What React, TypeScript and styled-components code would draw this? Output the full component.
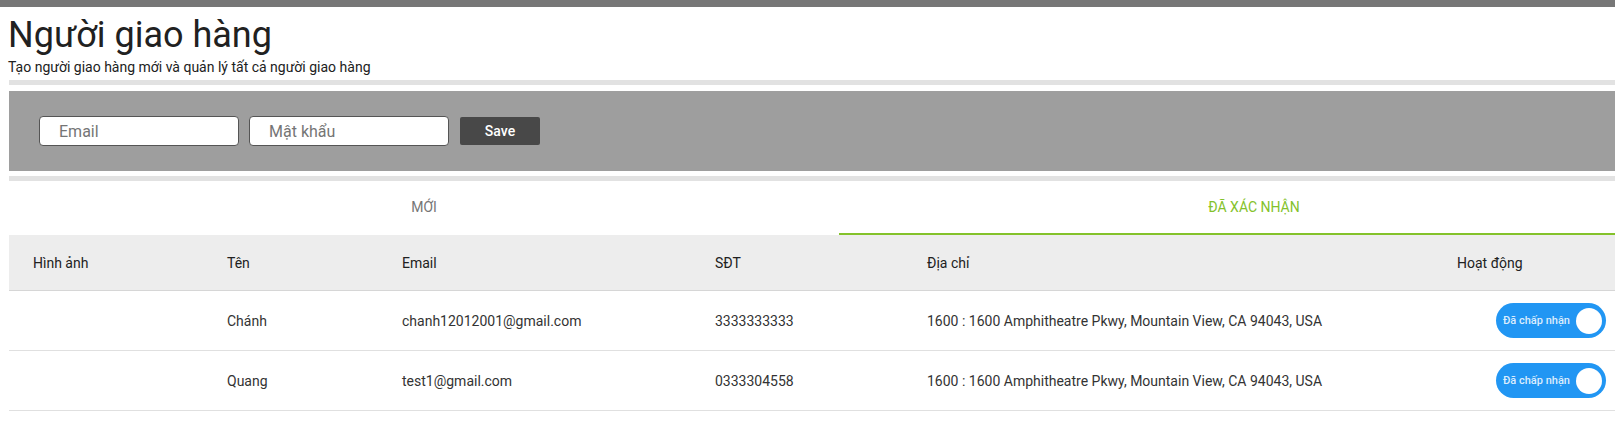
import React from "react";
import styled, { createGlobalStyle } from "styled-components";

const GlobalStyle = createGlobalStyle`
  html, body {
    margin: 0;
    padding: 0;
    overflow: hidden;
    background: #ffffff;
    font-family: Roboto, "Noto Sans", "Liberation Sans", sans-serif;
  }
`;

const TopBar = styled.div`
  height: 7px;
  background: #777777;
`;

const Header = styled.header`
  padding: 10px 0 0 8px;
`;

const Title = styled.h1`
  margin: 0;
  font-size: 36px;
  line-height: 37px;
  font-weight: 400;
  color: #212121;
`;

const Subtitle = styled.p`
  margin: 5px 0 0;
  font-size: 14px;
  line-height: 16px;
  color: #212121;
`;

const Content = styled.main`
  margin-top: 5px;
  padding-left: 9px;
  width: 1660px;
`;

const Divider = styled.div`
  height: 5px;
  background: #e2e2e2;
`;

const FormPanel = styled.form`
  margin: 6px 0 5px;
  height: 80px;
  background: #9e9e9e;
  display: flex;
  align-items: center;
  gap: 10px;
  padding: 0 30px;
`;

const Input = styled.input`
  box-sizing: border-box;
  width: 200px;
  height: 30px;
  border: 1px solid #555555;
  border-radius: 4px;
  background: #ffffff;
  padding: 0 0 0 19px;
  font-family: Roboto, "Liberation Sans", sans-serif;
  font-size: 16px;
  color: #333333;
  &::placeholder {
    color: #757575;
  }
`;

const SaveButton = styled.button`
  width: 80px;
  height: 28px;
  margin-left: 1px;
  border: none;
  border-radius: 2px;
  background: #484848;
  color: #ffffff;
  font-family: Roboto, "Liberation Sans", sans-serif;
  font-size: 14px;
  font-weight: 500;
`;

const Tabs = styled.div`
  display: grid;
  grid-template-columns: 1fr 1fr;
`;

const Tab = styled.div<{ $active?: boolean }>`
  height: 52px;
  display: flex;
  align-items: center;
  justify-content: center;
  font-size: 14px;
  text-transform: uppercase;
  color: ${(p) => (p.$active ? "#84c22b" : "#757575")};
  border-bottom: 2px solid ${(p) => (p.$active ? "#84c22b" : "transparent")};
`;

const Row = styled.div<{ $head?: boolean }>`
  display: grid;
  grid-template-columns: 194px 175px 313px 212px 530px 236px;
  align-items: center;
  height: ${(p) => (p.$head ? "55px" : "59px")};
  background: ${(p) => (p.$head ? "#ededed" : "#ffffff")};
  border-bottom: 1px solid ${(p) => (p.$head ? "#d6d6d6" : "#e0e0e0")};
  font-size: 14px;
  color: ${(p) => (p.$head ? "#212121" : "#333333")};
`;

const Cell = styled.div<{ $center?: boolean }>`
  padding-left: ${(p) => (p.$center ? "0" : "24px")};
  display: flex;
  justify-content: ${(p) => (p.$center ? "center" : "flex-start")};
  white-space: nowrap;
`;

const Toggle = styled.div`
  box-sizing: border-box;
  width: 110px;
  height: 35px;
  border-radius: 18px;
  background: #2196f3;
  display: flex;
  align-items: center;
  padding: 0 4px 0 7px;
  font-size: 11px;
  font-weight: 500;
  color: rgba(255, 255, 255, 0.85);
`;

const Knob = styled.span`
  margin-left: auto;
  width: 26px;
  height: 26px;
  border-radius: 50%;
  background: #ffffff;
`;

const shippers = [
  {
    name: "Chánh",
    email: "chanh12012001@gmail.com",
    phone: "3333333333",
    address: "1600 : 1600 Amphitheatre Pkwy, Mountain View, CA 94043, USA",
  },
  {
    name: "Quang",
    email: "test1@gmail.com",
    phone: "0333304558",
    address: "1600 : 1600 Amphitheatre Pkwy, Mountain View, CA 94043, USA",
  },
];

export default function App() {
  return (
    <>
      <GlobalStyle />
      <TopBar />
      <Header>
        <Title>Người giao hàng</Title>
        <Subtitle>Tạo người giao hàng mới và quản lý tất cả người giao hàng</Subtitle>
      </Header>
      <Content>
        <Divider />
        <FormPanel onSubmit={(e) => e.preventDefault()}>
          <Input placeholder="Email" />
          <Input placeholder="Mật khẩu" type="password" />
          <SaveButton type="submit">Save</SaveButton>
        </FormPanel>
        <Divider />
        <Tabs>
          <Tab>Mới</Tab>
          <Tab $active>Đã xác nhận</Tab>
        </Tabs>
        <Row $head>
          <Cell>Hình ảnh</Cell>
          <Cell>Tên</Cell>
          <Cell>Email</Cell>
          <Cell>SĐT</Cell>
          <Cell>Địa chỉ</Cell>
          <Cell>Hoạt động</Cell>
        </Row>
        {shippers.map((s) => (
          <Row key={s.email}>
            <Cell />
            <Cell>{s.name}</Cell>
            <Cell>{s.email}</Cell>
            <Cell>{s.phone}</Cell>
            <Cell>{s.address}</Cell>
            <Cell $center>
              <Toggle>
                Đã chấp nhận
                <Knob />
              </Toggle>
            </Cell>
          </Row>
        ))}
      </Content>
    </>
  );
}
